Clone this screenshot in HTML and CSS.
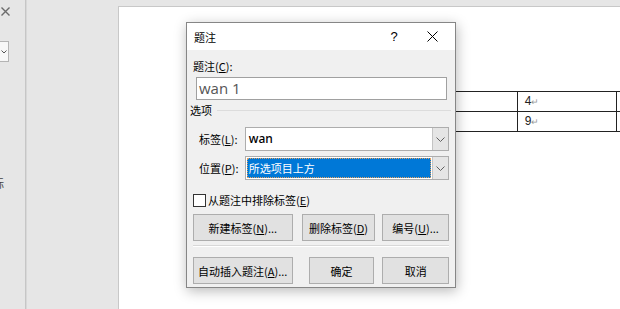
FILE: index.html
```html
<!DOCTYPE html>
<html lang="zh-CN">
<head>
    <meta charset="UTF-8">
    <title>题注</title>
    <link rel="stylesheet" href="styles.css">
</head>
<body>
    <div class="side-panel">
        <svg class="side-close" width="9" height="9" viewBox="0 0 9 9">
            <path d="M0.5 0.5 L8.5 8.5 M8.5 0.5 L0.5 8.5" stroke="#6b6b6b" stroke-width="1.4" fill="none"/>
        </svg>
        <div class="side-select">
            <svg width="6" height="4" viewBox="0 0 6 4">
                <path d="M0.5 0.5 L3 3 L5.5 0.5" stroke="#555" stroke-width="1" fill="none"/>
            </svg>
        </div>
        <div class="side-text">标</div>
    </div>

    <div class="page">
        <table class="doc-table">
            <tr><td></td><td></td><td></td><td>4<span class="para">↵</span></td><td></td></tr>
            <tr><td></td><td></td><td></td><td>9<span class="para">↵</span></td><td></td></tr>
        </table>
    </div>

    <div class="dialog">
        <div class="titlebar">
            <span class="title">题注</span>
            <span class="help">?</span>
            <span class="close">
                <svg width="11" height="11" viewBox="0 0 11 11">
                    <path d="M0.5 0.5 L10.5 10.5 M10.5 0.5 L0.5 10.5" stroke="#000" stroke-width="1" fill="none"/>
                </svg>
            </span>
        </div>
        <div class="dialog-body">
            <div class="field-label">题注(<u>C</u>):</div>
            <div class="caption-input">wan 1</div>

            <div class="group-title"><span>选项</span></div>

            <div class="combo-row">
                <span class="combo-label">标签(<u>L</u>):</span>
                <div class="combo">
                    <span class="combo-value">wan</span>
                    <span class="combo-btn">
                        <svg width="9" height="5" viewBox="0 0 9 5"><path d="M0.5 0.5 L4.5 4.5 L8.5 0.5" stroke="#606060" stroke-width="1" fill="none"/></svg>
                    </span>
                </div>
            </div>
            <div class="combo-row">
                <span class="combo-label">位置(<u>P</u>):</span>
                <div class="combo">
                    <span class="combo-value selected">所选项目上方</span>
                    <span class="combo-btn">
                        <svg width="9" height="5" viewBox="0 0 9 5"><path d="M0.5 0.5 L4.5 4.5 L8.5 0.5" stroke="#606060" stroke-width="1" fill="none"/></svg>
                    </span>
                </div>
            </div>

            <label class="check-row">
                <span class="checkbox"></span>
                <span>从题注中排除标签(<u>E</u>)</span>
            </label>

            <div class="btn-row">
                <button class="btn btn-new">新建标签(<u>N</u>)...</button>
                <button class="btn btn-delete">删除标签(<u>D</u>)</button>
                <button class="btn btn-number">编号(<u>U</u>)...</button>
            </div>

            <div class="separator"></div>

            <div class="btn-row">
                <button class="btn btn-auto">自动插入题注(<u>A</u>)...</button>
                <button class="btn btn-ok">确定</button>
                <button class="btn btn-cancel">取消</button>
            </div>
        </div>
    </div>
</body>
</html>
```

FILE: styles.css
```css
body {
    margin: 0;
    width: 620px;
    height: 309px;
    overflow: hidden;
    background-color: #e6e6e6;
    font-family: "Noto Sans", "Noto Sans CJK SC", sans-serif;
    font-size: 12px;
    color: #000;
    display: flex;
    position: relative;
}
u {
    text-decoration: underline;
    text-underline-offset: 1px;
}

/* left task pane, cut off */
.side-panel {
    width: 25px;
    flex-shrink: 0;
    border-right: 1px solid #c6c6c6;
    box-shadow: 1px 0 0 #d8d8d8;
    padding-top: 7px;
    overflow: hidden;
}
.side-close {
    display: block;
    margin-left: 1px;
}
.side-select {
    width: 10px;
    height: 21px;
    margin-top: 25px;
    margin-left: -1px;
    border: 1px solid #b4b4b4;
    background: #f7f7f7;
    display: flex;
    align-items: center;
    justify-content: center;
    box-sizing: border-box;
}
.side-select svg {
    margin-left: -1px;
}
.side-text {
    margin-top: 114px;
    margin-left: -7px;
    line-height: 14px;
    font-size: 11px;
    font-family: "Noto Sans CJK SC", sans-serif;
    color: #444;
}

/* document page */
.page {
    flex: 1;
    min-width: 0;
    margin-left: 92px;
    margin-top: 6px;
    background: #fff;
    border-left: 1px solid #c8c8c8;
    border-top: 1px solid #c8c8c8;
    padding-top: 84px;
    padding-left: 99px;
    overflow: hidden;
}
.doc-table {
    width: 499px;
    border-collapse: collapse;
    table-layout: fixed;
}
.doc-table td {
    height: 18px;
    border: 1px solid #222;
    padding: 0 0 0 7px;
    line-height: 18px;
    font-size: 12px;
    font-family: "Liberation Sans", sans-serif;
    color: #222;
}
.para {
    font-size: 9px;
    color: #999;
}

/* caption dialog */
.dialog {
    position: absolute;
    left: 186px;
    top: 22px;
    width: 270px;
    height: 266px;
    box-sizing: border-box;
    border: 1px solid #868686;
    background: #f0f0f0;
    box-shadow: 1px 3px 12px rgba(0,0,0,0.28);
    font-family: "Noto Sans CJK SC", sans-serif;
    font-size: 11px;
}
.titlebar {
    height: 27px;
    background: #fff;
    display: flex;
    align-items: center;
    padding-left: 7px;
}
.title {
    flex: 1;
    line-height: 16px;
}
.help {
    width: 30px;
    text-align: center;
    font-size: 13px;
    font-family: "Liberation Sans", sans-serif;
}
.close {
    width: 46px;
    display: flex;
    justify-content: center;
}
.dialog-body {
    padding: 0 6px;
}
.field-label {
    margin-top: 8px;
    line-height: 16px;
}
.caption-input {
    margin-top: 3px;
    margin-left: 3px;
    width: 251px;
    height: 23px;
    box-sizing: border-box;
    border: 1px solid #a0a0a0;
    background: #fff;
    padding-left: 2px;
    font-family: "Open Sans", "Noto Sans", sans-serif;
    font-size: 15px;
    line-height: 20px;
    color: #555;
}
.group-title {
    margin-top: 2px;
    margin-left: -3px;
    display: flex;
    align-items: center;
    line-height: 16px;
}
.group-title::after {
    content: "";
    flex: 1;
    margin-left: 5px;
    margin-right: -2px;
    border-top: 1px solid #dcdcdc;
}
.combo-row {
    display: flex;
    align-items: center;
    margin-top: 9px;
    margin-left: 6px;
}
.combo-row + .combo-row {
    margin-top: 5px;
}
.combo-label {
    width: 46px;
    line-height: 16px;
}
.combo {
    width: 205px;
    height: 24px;
    box-sizing: border-box;
    border: 1px solid #adadad;
    background: #fff;
    display: flex;
    align-items: center;
}
.combo-value {
    flex: 1;
    padding-left: 3px;
    line-height: 16px;
    font-family: "Noto Sans", "Noto Sans CJK SC", sans-serif;
    font-size: 12px;
    font-weight: 500;
}
.combo-value.selected {
    margin: 1px;
    align-self: stretch;
    display: flex;
    align-items: center;
    background: #0078d7;
    color: #fff;
    outline: 1px dotted #e0a060;
    outline-offset: -1px;
    font-family: "Noto Sans CJK SC", sans-serif;
    font-size: 11px;
    font-weight: normal;
    padding-left: 2px;
}
.combo-btn {
    width: 15px;
    align-self: stretch;
    background: #e5e5e5;
    border-left: 1px solid #c4c4c4;
    display: flex;
    align-items: center;
    justify-content: center;
}
.check-row {
    display: flex;
    align-items: center;
    margin-top: 12px;
    line-height: 16px;
}
.checkbox {
    width: 13px;
    height: 13px;
    box-sizing: border-box;
    border: 1px solid #333;
    background: #fff;
    margin-right: 2px;
}
.btn-row {
    display: flex;
    margin-top: 6px;
}
.btn {
    height: 27px;
    box-sizing: border-box;
    border: 1px solid #adadad;
    background: #e1e1e1;
    font-family: "Noto Sans CJK SC", sans-serif;
    font-size: 11px;
    color: #000;
    padding: 0;
    line-height: 16px;
}
.btn-new, .btn-auto {
    width: 100px;
}
.btn-delete {
    width: 74px;
    margin-left: 9px;
}
.btn-number, .btn-cancel {
    width: 67px;
    margin-left: 7px;
}
.btn-ok {
    width: 66px;
    margin-left: 16px;
}
.btn-cancel {
    margin-left: 8px;
}
.separator {
    margin-top: 4px;
    height: 0;
    border-top: 1px solid #d8d8d8;
    border-bottom: 1px solid #fff;
}
.separator + .btn-row {
    margin-top: 10px;
}
```
